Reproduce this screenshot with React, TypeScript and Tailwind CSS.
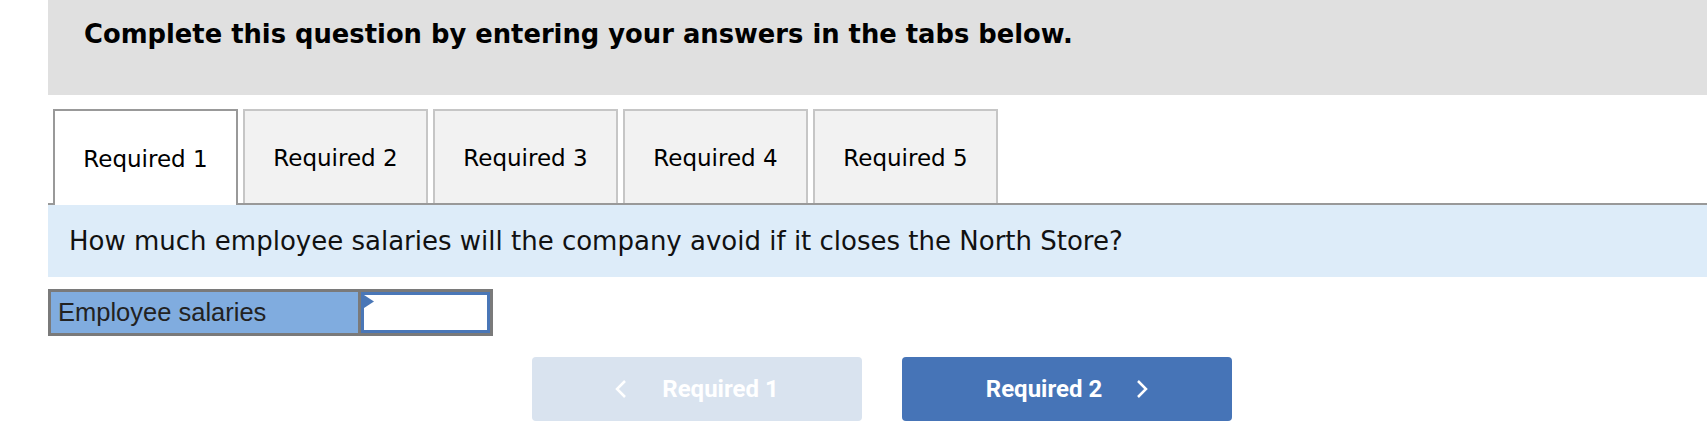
import React from "react";

const tabs = ["Required 1", "Required 2", "Required 3", "Required 4", "Required 5"];

export default function App() {
  return (
    <div className="w-full min-h-[441px] bg-white" style={{ fontFamily: '"DejaVu Sans", Verdana, sans-serif' }}>
      <div className="ml-[48px] h-[95px] bg-[#e0e0e0] pl-[36px] pt-[19px]">
        <p className="text-[25.8px] leading-[30px] font-bold text-black">
          Complete this question by entering your answers in the tabs below.
        </p>
      </div>

      <div className="ml-[48px] mt-[14px] flex items-end gap-[5px] border-b-2 border-[#999999] pl-[5px]">
        {tabs.map((t, i) =>
          i === 0 ? (
            <div
              key={t}
              className="-mb-[2px] flex h-[96px] w-[185px] items-center justify-center border-2 border-b-0 border-[#999999] bg-white pt-[2px] text-[23px] text-black"
            >
              {t}
            </div>
          ) : (
            <div
              key={t}
              className="flex h-[94px] w-[185px] items-center justify-center border-2 border-b-0 border-[#c6c6c6] bg-[#f2f2f2] pt-[2px] text-[23px] text-black"
            >
              {t}
            </div>
          )
        )}
      </div>

      <div className="ml-[48px] flex h-[72px] items-center bg-[#ddecf9] pl-[21px] text-[26px] text-[#111111]">
        How much employee salaries will the company avoid if it closes the North Store?
      </div>

      <div className="ml-[48px] mt-[12px] flex h-[47px] w-[445px] border-[3px] border-[#7a7a7a]">
        <div
          className="flex w-[310px] items-center border-r-[3px] border-[#7a7a7a] bg-[#80acdf] pl-[7px] text-[25.5px] text-[#222222]"
          style={{ fontFamily: '"Liberation Sans", Arial, sans-serif' }}
        >
          Employee salaries
        </div>
        <div className="relative flex-1 border-[3px] border-[#4a77b7] bg-white">
          <svg className="absolute left-0 top-0" width="10" height="13" viewBox="0 0 10 13">
            <polygon points="0,0 10,6.5 0,13" fill="#4a77b7" />
          </svg>
        </div>
      </div>

      <div
        className="mt-[21px] flex gap-[40px] pl-[532px]"
        style={{ fontFamily: 'Roboto, "Noto Sans", sans-serif' }}
      >
        <button className="flex h-[64px] w-[330px] items-center justify-center gap-[35px] rounded-[4px] bg-[#d9e3ef] text-[24px] font-bold text-white">
          <svg width="12" height="20" viewBox="0 0 12 20">
            <polyline points="10,2 2,10 10,18" fill="none" stroke="white" strokeWidth="2.5" />
          </svg>
          <span>Required 1</span>
        </button>
        <button className="flex h-[64px] w-[330px] items-center justify-center gap-[34px] rounded-[4px] bg-[#4674b7] text-[24px] font-bold text-white">
          <span>Required 2</span>
          <svg width="12" height="20" viewBox="0 0 12 20">
            <polyline points="2,2 10,10 2,18" fill="none" stroke="white" strokeWidth="2.5" />
          </svg>
        </button>
      </div>
    </div>
  );
}
